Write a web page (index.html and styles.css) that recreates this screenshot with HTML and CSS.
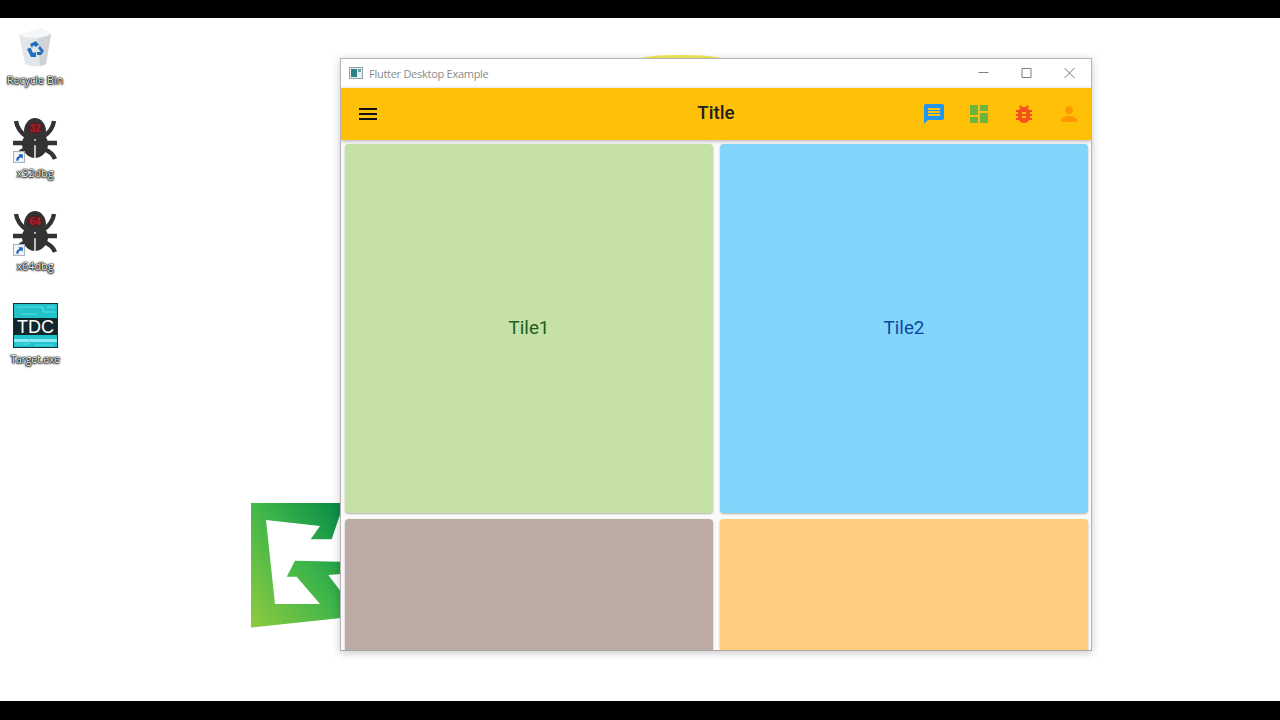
FILE: index.html
```html
<!DOCTYPE html>
<html lang="en">
<head>
    <meta charset="UTF-8">
    <meta name="viewport" content="width=device-width, initial-scale=1.0">
    <title>Flutter Desktop Example</title>
    <link rel="stylesheet" href="styles.css">
</head>
<body>
    <svg class="defs" width="0" height="0">
        <defs>
            <symbol id="bug" viewBox="0 0 45 42">
                <g class="bug-legs">
                    <path d="M3 3 C4 10 8 15 14 19"/>
                    <path d="M41 3 C40 10 36 15 30 19"/>
                    <path d="M0 25 H44"/>
                    <path d="M13 31 C8 33 4 36 2 41"/>
                    <path d="M31 31 C36 33 40 36 42 41"/>
                </g>
                <path class="bug-body" d="M22 15 C14 15 9 19 9 26 C9 33 14 39 21.3 40 V21 H22.7 V40 C30 39 35 33 35 26 C35 19 30 15 22 15 Z"/>
                <path class="bug-head" d="M11 13 C11 6 16 0 22 0 C28 0 33 6 33 13 C33 17 27 18 22 18 C17 18 11 17 11 13 Z"/>
                <ellipse class="bug-hat" cx="22" cy="10" rx="8" ry="6"/>
            </symbol>
            <symbol id="shortcut" viewBox="0 0 11 11">
                <rect class="shortcut-box" x="0.5" y="0.5" width="10" height="10"/>
                <path class="shortcut-arrow" d="M3 9 C3 6 4 5 6 4.6 L5 3 H9 V7 L7.6 5.8 C6 6.2 5 7 5 9 Z"/>
            </symbol>
            <linearGradient id="logoFill" x1="0" y1="1" x2="1" y2="0">
                <stop offset="0" stop-color="#8fcb3f"/>
                <stop offset="0.55" stop-color="#3db54a"/>
                <stop offset="1" stop-color="#058a45"/>
            </linearGradient>
        </defs>
    </svg>

    <div class="bar"></div>

    <main class="desktop">
        <div class="shortcut recycle">
            <svg class="recycle-art" viewBox="0 0 34 40">
                <path class="bin-side" d="M1 8 L24 1 L33 7 L28 37 C23 40 12 40 7 37 Z"/>
                <path class="bin-shade" d="M20 11 L33 7 L28 37 C26 38.5 24 39 22 39 Z"/>
                <path class="bin-inner" d="M1 8 L24 1 L33 7 C25 12 9 12 1 8 Z"/>
                <path class="bin-arrows" d="M12 17 L18 14 L21 18 L17.5 20 L15.5 18 L14 21 Z M22 19 L26 24 L23 28 L19 28 L19 25 L23 25 L20 21 Z M9 22 L12.5 20.5 L15 26 L18 25 L18 30 L13 30 Z"/>
            </svg>
            <span class="shortcut-label">Recycle Bin</span>
        </div>

        <div class="shortcut x32">
            <div class="bug-art">
                <svg class="bug-icon" viewBox="0 0 45 42"><use href="#bug"/><text class="bug-num" x="22" y="13.5">32</text></svg>
                <svg class="link-icon" viewBox="0 0 11 11"><use href="#shortcut"/></svg>
            </div>
            <span class="shortcut-label">x32dbg</span>
        </div>

        <div class="shortcut x64">
            <div class="bug-art">
                <svg class="bug-icon" viewBox="0 0 45 42"><use href="#bug"/><text class="bug-num" x="22" y="13.5">64</text></svg>
                <svg class="link-icon" viewBox="0 0 11 11"><use href="#shortcut"/></svg>
            </div>
            <span class="shortcut-label">x64dbg</span>
        </div>

        <div class="shortcut target">
            <svg class="tdc" viewBox="0 0 45 45">
                <rect class="tdc-sky" x="0.5" y="0.5" width="44" height="44"/>
                <path class="tdc-trace" d="M4 4 H30 V9 H42 M8 11 H24 M34 4 H42"/>
                <rect class="tdc-band" x="1" y="15" width="43" height="17"/>
                <rect class="tdc-glow" x="1" y="36" width="43" height="3"/>
                <path class="tdc-trace" d="M4 41 H16 V36 M22 42 H40"/>
                <text class="tdc-text" x="22.5" y="29.5">TDC</text>
            </svg>
            <span class="shortcut-label target-label">Target.exe</span>
        </div>

        <div class="wallpaper-arc"></div>

        <svg class="logo" viewBox="0 0 90 125">
            <path fill="url(#logoFill)" d="M0 0 H90 V115 L0 124.5 Z"/>
            <path class="logo-cut" d="M15 17 L69 23 L59.7 36.3 H80.7 L90 8.7 V58.7 L44 57.7 L35.7 73.7 H45.7 L69 101 H24 Z"/>
            <path class="logo-cut" d="M77.3 72 L90 71 V88.7 Z"/>
        </svg>

        <section class="window">
            <header class="titlebar">
                <svg class="app-glyph" viewBox="0 0 14 14">
                    <rect class="glyph-frame" x="0.5" y="1.5" width="13" height="11"/>
                    <rect class="glyph-left" x="2" y="3" width="6" height="8"/>
                    <rect class="glyph-right" x="9" y="3" width="3" height="3"/>
                </svg>
                <span class="window-title">Flutter Desktop Example</span>
                <div class="window-buttons">
                    <svg class="caption-btn" viewBox="0 0 43 26"><path d="M16.5 12.5 H26.5"/></svg>
                    <svg class="caption-btn" viewBox="0 0 43 26"><path d="M17 8.5 H26 V17.5 H17 Z"/></svg>
                    <svg class="caption-btn" viewBox="0 0 43 26"><path d="M16.5 8 L26.5 18 M26.5 8 L16.5 18"/></svg>
                </div>
            </header>

            <div class="appbar">
                <button class="icon-btn menu-btn">
                    <svg class="icon" viewBox="0 0 24 24"><path d="M3 18h18v-2H3v2zm0-5h18v-2H3v2zm0-7v2h18V6H3z"/></svg>
                </button>
                <h1 class="appbar-title">Title</h1>
                <div class="actions">
                    <button class="icon-btn">
                        <svg class="icon blue" viewBox="0 0 24 24"><path d="M20 2H4c-1.1 0-1.99.9-1.99 2L2 22l4-4h14c1.1 0 2-.9 2-2V4c0-1.1-.9-2-2-2zm-2 12H6v-2h12v2zm0-3H6V9h12v2zm0-3H6V6h12v2z"/></svg>
                    </button>
                    <button class="icon-btn">
                        <svg class="icon green" viewBox="0 0 24 24"><path d="M3 13h8V3H3v10zm0 8h8v-6H3v6zm10 0h8V11h-8v10zm0-18v6h8V3h-8z"/></svg>
                    </button>
                    <button class="icon-btn">
                        <svg class="icon red" viewBox="0 0 24 24"><path d="M20 8h-2.81c-.45-.78-1.07-1.45-1.82-1.96L17 4.41 15.59 3l-2.17 2.17C12.96 5.06 12.49 5 12 5c-.49 0-.96.06-1.41.17L8.41 3 7 4.41l1.62 1.63C7.88 6.55 7.26 7.22 6.81 8H4v2h2.09c-.05.33-.09.66-.09 1v1H4v2h2v1c0 .34.04.67.09 1H4v2h2.81c1.04 1.79 2.97 3 5.19 3s4.15-1.21 5.19-3H20v-2h-2.09c.05-.33.09-.66.09-1v-1h2v-2h-2v-1c0-.34-.04-.67-.09-1H20V8zm-6 8h-4v-2h4v2zm0-4h-4v-2h4v2z"/></svg>
                    </button>
                    <button class="icon-btn">
                        <svg class="icon orange" viewBox="0 0 24 24"><path d="M12 12c2.21 0 4-1.79 4-4s-1.79-4-4-4-4 1.79-4 4 1.79 4 4 4zm0 2c-2.67 0-8 1.34-8 4v2h16v-2c0-2.66-5.33-4-8-4z"/></svg>
                    </button>
                </div>
            </div>

            <div class="tiles">
                <div class="tile tile-green">Tile1</div>
                <div class="tile tile-blue">Tile2</div>
                <div class="tile tile-brown"></div>
                <div class="tile tile-orange"></div>
            </div>
        </section>
    </main>

    <div class="bar bar-bottom"></div>
</body>
</html>
```

FILE: styles.css
```css
* {
    margin: 0;
    padding: 0;
    box-sizing: border-box;
}

body {
    width: 1280px;
    height: 720px;
    display: flex;
    flex-direction: column;
    overflow: hidden;
    background: #fff;
    font-family: Roboto, sans-serif;
}

.defs {
    position: absolute;
}

.bar {
    height: 18px;
    background: #000;
}

.bar-bottom {
    height: 19px;
}

.desktop {
    position: relative;
    flex: 1;
    background: #fff;
}

/* desktop shortcuts */
.shortcut {
    position: absolute;
    left: 0;
    width: 70px;
    display: flex;
    flex-direction: column;
    align-items: center;
}

.recycle { top: 9px; }
.x32 { top: 100px; }
.x64 { top: 193px; }
.target { top: 285px; }

.shortcut-label {
    font-family: "Open Sans", sans-serif;
    font-size: 11px;
    line-height: 14px;
    letter-spacing: -0.1px;
    color: #f2f2f2;
    text-shadow: 0 0 2px #000, 0 1px 2px #000, 0 0 1px #000, 0 0 1px #000;
}

.target-label {
    letter-spacing: -0.4px;
}

.recycle-art {
    width: 34px;
    height: 40px;
    margin-bottom: 6px;
}

.bin-side { fill: #e4e7e9; }
.bin-shade { fill: #cfd3d6; }
.bin-inner { fill: #f5f6f7; }
.bin-arrows { fill: #1e6fc4; }

.bug-art {
    position: relative;
    width: 45px;
    height: 42px;
    margin-bottom: 6px;
}

.bug-icon {
    display: block;
    width: 45px;
    height: 42px;
}

.bug-legs path {
    fill: none;
    stroke: #333;
    stroke-width: 4.4;
}

.bug-body, .bug-head { fill: #333; }
.bug-hat { fill: #43262a; }

.bug-num {
    font-family: "Liberation Sans", sans-serif;
    font-size: 10px;
    font-weight: 700;
    fill: #c8141c;
    text-anchor: middle;
}

.link-icon {
    position: absolute;
    left: 0;
    bottom: -3px;
    width: 12px;
    height: 12px;
}

.shortcut-box {
    fill: #f4f7fb;
    stroke: #a9b4c2;
}

.shortcut-arrow { fill: #1c63b8; }

.tdc {
    display: block;
    width: 45px;
    height: 45px;
    margin-bottom: 4px;
}

.tdc-sky {
    fill: #22c3cb;
    stroke: #12323a;
}

.tdc-trace {
    fill: none;
    stroke: #5fdde6;
    stroke-width: 1;
}

.tdc-band { fill: #10282c; }
.tdc-glow { fill: #8beaf2; }

.tdc-text {
    font-family: "Liberation Sans", sans-serif;
    font-size: 18px;
    fill: #fff;
    text-anchor: middle;
}

/* things behind the window */
.wallpaper-arc {
    position: absolute;
    left: 640px;
    top: 37px;
    width: 82px;
    height: 4px;
    border-radius: 50% 50% 0 0 / 100% 100% 0 0;
    background: #f2ea55;
}

.logo {
    position: absolute;
    left: 251px;
    top: 485px;
    width: 90px;
    height: 125px;
}

.logo-cut { fill: #fff; }

/* flutter window */
.window {
    position: absolute;
    left: 340px;
    top: 40px;
    width: 752px;
    height: 593px;
    display: flex;
    flex-direction: column;
    overflow: hidden;
    background: #fafafa;
    border: 1px solid #b4b4b4;
    border-bottom: 1px solid #a8a8a8;
    box-shadow: 0 2px 8px rgba(0, 0, 0, 0.22);
}

.titlebar {
    height: 29px;
    flex-shrink: 0;
    display: flex;
    align-items: center;
    padding: 1px 0 2px 8px;
    background: #fff;
}

.app-glyph {
    width: 14px;
    height: 14px;
    margin-right: 6px;
}

.glyph-frame {
    fill: #e6eef0;
    stroke: #8fa3a8;
}

.glyph-left { fill: #2f7f86; }
.glyph-right { fill: #6fa3aa; }

.window-title {
    font-family: "Open Sans", sans-serif;
    font-size: 11px;
    letter-spacing: -0.27px;
    color: #8b8b8b;
}

.window-buttons {
    margin-left: auto;
    display: flex;
}

.caption-btn {
    display: block;
    width: 43px;
    height: 26px;
}

.caption-btn path {
    fill: none;
    stroke: #7f7f7f;
    stroke-width: 1;
}

.appbar {
    position: relative;
    z-index: 1;
    height: 52px;
    flex-shrink: 0;
    display: flex;
    align-items: center;
    justify-content: space-between;
    background: #ffc107;
    box-shadow: 0 1px 4px rgba(0, 0, 0, 0.3);
}

.icon-btn {
    width: 45px;
    height: 48px;
    display: flex;
    align-items: center;
    justify-content: center;
    border: none;
    background: none;
}

.menu-btn {
    width: 54px;
}

.icon {
    width: 24px;
    height: 24px;
    fill: #111;
}

.icon.blue { fill: #2196f3; }
.icon.green { fill: #6cb33f; }
.icon.red { fill: #f4511e; }
.icon.orange { fill: #ff9800; }

.appbar-title {
    position: absolute;
    left: 0;
    right: 0;
    padding-bottom: 2px;
    text-align: center;
    font-size: 18.8px;
    font-weight: 500;
    color: #212121;
    pointer-events: none;
}

.actions {
    display: flex;
}

.tiles {
    flex: 1;
    display: grid;
    grid-template-columns: 368px 368px;
    grid-auto-rows: 369px;
    column-gap: 7px;
    row-gap: 6px;
    padding: 4px 3px 0 4px;
    overflow: hidden;
}

.tile {
    display: flex;
    align-items: center;
    justify-content: center;
    padding-bottom: 2px;
    border-radius: 4px;
    font-size: 18.8px;
    box-shadow: 0 1px 2px rgba(0, 0, 0, 0.3);
}

.tile-green { background: #c5e1a5; color: #1b5e20; }
.tile-blue { background: #81d4fa; color: #0d47a1; }
.tile-brown { background: #bcaaa4; }
.tile-orange { background: #ffcc80; }
```
